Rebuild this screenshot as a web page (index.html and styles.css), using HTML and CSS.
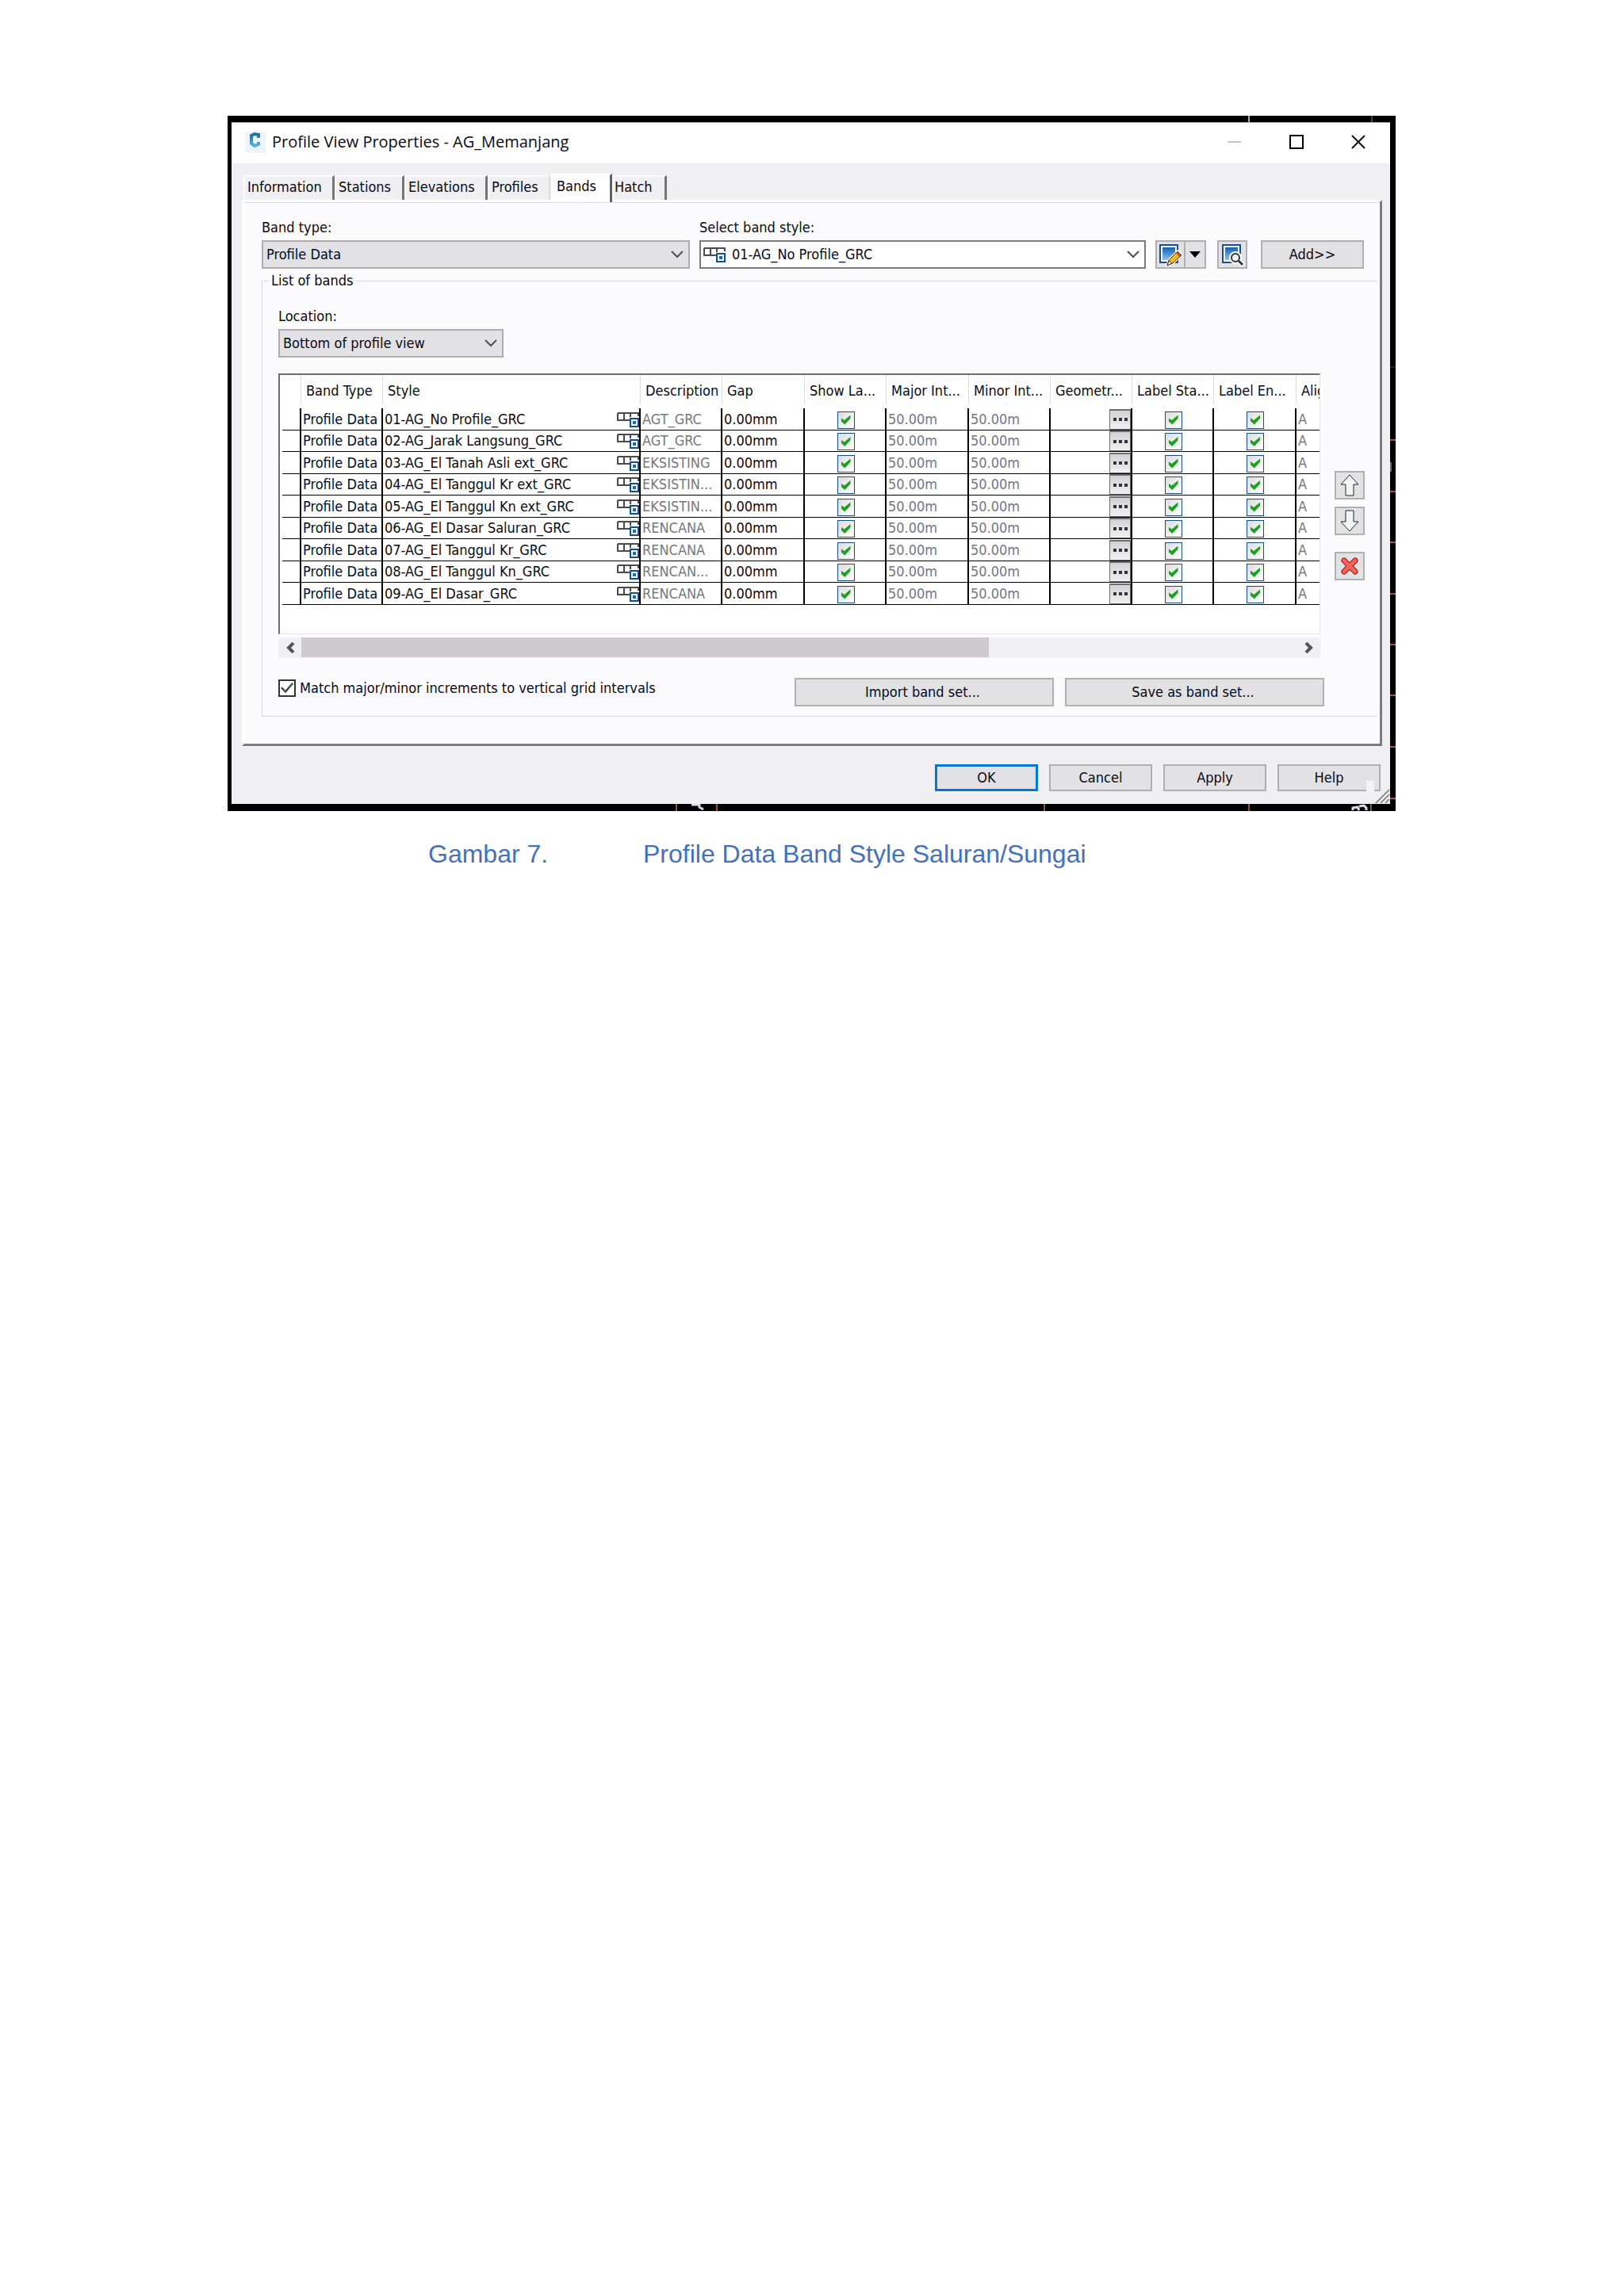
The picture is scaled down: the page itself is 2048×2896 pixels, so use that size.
FILE: index.html
```html
<!DOCTYPE html>
<html lang="id">
<head>
    <meta charset="UTF-8">
    <meta name="viewport" content="width=device-width, initial-scale=1.0">
    <title>Profile View Properties</title>
    <link rel="stylesheet" href="styles.css">
</head>
<body>
    <!-- shared icons -->
    <svg class="defs" width="0" height="0">
        <defs>
            <linearGradient id="blue" x1="0" y1="0" x2="0" y2="1">
                <stop offset="0" stop-color="#0f62b4"/>
                <stop offset="1" stop-color="#8cc0f0"/>
            </linearGradient>
            <linearGradient id="logo" x1="0" y1="0" x2="0" y2="1">
                <stop offset="0" stop-color="#1f6f9f"/>
                <stop offset="1" stop-color="#4ab4ea"/>
            </linearGradient>
        </defs>
        <symbol id="band" viewBox="0 0 28 20">
            <path d="M1 2H27V6M1 2V11H16M9 2V11M17 2V7" fill="none" stroke="#4a4a4c" stroke-width="2"/>
            <rect x="16" y="8" width="12" height="12" fill="#0d4f99"/>
            <rect x="18" y="10" width="8" height="8" fill="#fff"/>
            <rect x="20" y="12" width="4" height="4" fill="#1769c4"/>
        </symbol>
        <symbol id="chevron" viewBox="0 0 16 10">
            <path d="M1 1L8 8L15 1" fill="none" stroke="#505050" stroke-width="2"/>
        </symbol>
    </svg>

    <figure>
        <div class="capture">
            <svg class="grid-right" width="7" height="878">
                <path d="M0 317H7M0 862H7" stroke="#444"/>
                <path d="M0 409H7M0 474H7M0 538H7M0 603H7M0 667H7M0 731H7M0 796H7M0 861H7" stroke="#a8505c" stroke-width="2"/>
                <path d="M1 437V449" stroke="#666" stroke-width="2"/>
            </svg>
            <svg class="grid-top" width="186" height="8">
                <path d="M1 0V8" stroke="#aaa" stroke-width="2"/>
                <path d="M156 0V8" stroke="#444" stroke-width="2"/>
            </svg>
            <svg class="grid-bottom" width="908" height="9">
                <path d="M1 0V9M52 0V9M465 0V9M723 0V9" stroke="#90505a" stroke-width="2"/>
                <path d="M877 0V9" stroke="#666" stroke-width="2"/>
                <path d="M20 1H30V4L35 7M854 8V5L860 4L862 8M862 3L868 2L871 5V8" fill="none" stroke="#ddd" stroke-width="3"/>
            </svg>

            <div class="dialog">
                <div class="titlebar">
                    <svg class="app-icon" width="26" height="27" viewBox="0 0 26 27">
                        <rect width="26" height="27" fill="#edf5fa"/>
                        <path d="M17 8V4L12 3L8 5V15L12 18L17 16V13" fill="none" stroke="url(#logo)" stroke-width="4"/>
                    </svg>
                    <h1>Profile View Properties - AG_Memanjang</h1>
                    <button type="button" class="win" aria-label="Minimize" disabled><svg width="18" height="18"><path d="M0 9H17" stroke="#c4c4c4" stroke-width="2"/></svg></button>
                    <button type="button" class="win" aria-label="Maximize"><svg width="18" height="18"><rect x="1" y="1" width="16" height="16" fill="none" stroke="#000" stroke-width="2"/></svg></button>
                    <button type="button" class="win" aria-label="Close"><svg width="18" height="18"><path d="M1 1L17 17M17 1L1 17" stroke="#111" stroke-width="2"/></svg></button>
                </div>

                <div class="tabs" role="tablist">
                    <button type="button" role="tab">Information</button>
                    <button type="button" role="tab">Stations</button>
                    <button type="button" role="tab">Elevations</button>
                    <button type="button" role="tab" class="before-active">Profiles</button>
                    <button type="button" role="tab" class="active" aria-selected="true">Bands</button>
                    <button type="button" role="tab">Hatch</button>
                </div>

                <div class="panel">
                    <div class="top-row">
                        <div class="field type">
                            <label for="bandType">Band type:</label>
                            <div class="combo">
                                <select id="bandType"><option>Profile Data</option></select>
                                <svg class="arrow"><use href="#chevron"/></svg>
                            </div>
                        </div>
                        <div class="field style">
                            <label for="bandStyle">Select band style:</label>
                            <div class="combo white">
                                <svg class="combo-icon"><use href="#band"/></svg>
                                <select id="bandStyle"><option>01-AG_No Profile_GRC</option></select>
                                <svg class="arrow"><use href="#chevron"/></svg>
                            </div>
                        </div>
                        <div class="split">
                            <button type="button" class="btn icon" aria-label="Edit style">
                                <svg width="32" height="32" viewBox="0 0 32 32">
                                    <rect x="2" y="3" width="24" height="24" fill="#154f96"/>
                                    <rect x="4" y="5" width="20" height="20" fill="#fff"/>
                                    <rect x="6" y="7" width="16" height="16" fill="url(#blue)"/>
                                    <path d="M12 30L14 23L25 12L30 17L19 27Z" fill="#f2b830" stroke="#fff" stroke-width="3"/>
                                    <path d="M12 30L14 23L25 12L30 17L19 27Z" fill="#f2b830" stroke="#5a3d10"/>
                                    <path d="M23 14L25 12L30 17L27 19Z" fill="#b5562a"/>
                                    <path d="M12 30L14 24L18 27Z" fill="#fff" stroke="#333"/>
                                </svg>
                            </button>
                            <button type="button" class="btn drop" aria-label="More"><svg width="14" height="8"><path d="M0 0H14L7 8Z"/></svg></button>
                        </div>
                        <button type="button" class="btn icon search" aria-label="Pick style">
                            <svg width="32" height="32" viewBox="0 0 32 32">
                                <rect x="3" y="3" width="24" height="24" fill="#154f96"/>
                                <rect x="5" y="5" width="20" height="20" fill="#fff"/>
                                <rect x="7" y="7" width="16" height="16" fill="url(#blue)"/>
                                <path d="M24 24L30 30" stroke="#fff" stroke-width="6"/>
                                <circle cx="20" cy="20" r="6" fill="#f4f4f4" stroke="#fff" stroke-width="4"/>
                                <circle cx="20" cy="20" r="5" fill="#f4f4f4" stroke="#333" stroke-width="2"/>
                                <path d="M24 24L29 29" stroke="#333" stroke-width="3"/>
                            </svg>
                        </button>
                        <button type="button" class="btn add">Add&gt;&gt;</button>
                    </div>

                    <fieldset>
                        <legend>List of bands</legend>
                        <div class="field location">
                            <label for="location">Location:</label>
                            <div class="combo">
                                <select id="location"><option>Bottom of profile view</option></select>
                                <svg class="arrow"><use href="#chevron"/></svg>
                            </div>
                        </div>

                        <div class="list-row">
                            <div class="list">
                                <div class="table-box">
                                    <table>
                                        <colgroup>
                                            <col class="c-mark"><col class="c-std"><col class="c-style"><col class="c-std"><col class="c-wide"><col class="c-std">
                                            <col class="c-wide"><col class="c-std"><col class="c-std"><col class="c-std"><col class="c-wide"><col class="c-std">
                                        </colgroup>
                                        <thead>
                                            <tr><th></th><th>Band Type</th><th>Style</th><th>Description</th><th>Gap</th><th>Show La...</th><th>Major Int...</th><th>Minor Int...</th><th>Geometr...</th><th>Label Sta...</th><th>Label En...</th><th>Alig</th></tr>
                                        </thead>
                                        <tbody id="bands"></tbody>
                                    </table>
                                </div>
                                <div class="scrollbar">
                                    <button type="button" aria-label="Scroll left"><svg width="12" height="14"><path d="M10 1L4 7L10 13" fill="none" stroke="#555" stroke-width="4"/></svg></button>
                                    <div class="track"><div class="thumb"></div></div>
                                    <button type="button" aria-label="Scroll right"><svg width="12" height="14"><path d="M2 1L8 7L2 13" fill="none" stroke="#555" stroke-width="4"/></svg></button>
                                </div>
                            </div>
                            <div class="side">
                                <button type="button" class="btn icon" aria-label="Move up"><svg width="26" height="30"><path d="M13 2L24 14H18V28H8V14H2Z" fill="#f4f6f6" stroke="#222"/></svg></button>
                                <button type="button" class="btn icon" aria-label="Move down"><svg width="26" height="30"><path d="M13 28L24 16H18V2H8V16H2Z" fill="#f4f6f6" stroke="#222"/></svg></button>
                                <button type="button" class="btn icon remove" aria-label="Remove">
                                    <svg width="26" height="26"><path d="M6 6L20 20M20 6L6 20" stroke="#8e1512" stroke-width="7" stroke-linecap="round"/><path d="M6 6L20 20M20 6L6 20" stroke="#fb6158" stroke-width="5" stroke-linecap="round"/></svg>
                                </button>
                            </div>
                        </div>

                        <div class="set-row">
                            <input type="checkbox" id="match" checked>
                            <label for="match">Match major/minor increments to vertical grid intervals</label>
                            <button type="button" class="btn wide">Import band set...</button>
                            <button type="button" class="btn wide">Save as band set...</button>
                        </div>
                    </fieldset>
                </div>

                <div class="footer">
                    <button type="button" class="btn default">OK</button>
                    <button type="button" class="btn">Cancel</button>
                    <button type="button" class="btn">Apply</button>
                    <button type="button" class="btn">Help</button>
                    <svg class="grip" width="32" height="32">
                        <rect x="2" y="3" width="10" height="14" fill="#f4f3f5"/>
                        <path d="M14 31L31 14M20 31L31 20M26 31L31 26" stroke="#909090" stroke-width="2"/>
                        <path d="M17 31L31 17M23 31L31 23" stroke="#fff"/>
                    </svg>
                </div>
            </div>
        </div>
        <figcaption><span class="number">Gambar 7.</span><span>Profile Data Band Style Saluran/Sungai</span></figcaption>
    </figure>

    <script>
        const bands = [
            ["01-AG_No Profile_GRC", "AGT_GRC"],
            ["02-AG_Jarak Langsung_GRC", "AGT_GRC"],
            ["03-AG_El Tanah Asli ext_GRC", "EKSISTING"],
            ["04-AG_El Tanggul Kr ext_GRC", "EKSISTIN..."],
            ["05-AG_El Tanggul Kn ext_GRC", "EKSISTIN..."],
            ["06-AG_El Dasar Saluran_GRC", "RENCANA"],
            ["07-AG_El Tanggul Kr_GRC", "RENCANA"],
            ["08-AG_El Tanggul Kn_GRC", "RENCAN..."],
            ["09-AG_El Dasar_GRC", "RENCANA"]
        ];
        const check = name => `<td class="tick"><input type="checkbox" aria-label="${name}" checked></td>`;

        document.getElementById("bands").innerHTML = bands.map(([style, description]) => `
            <tr>
                <td></td>
                <td>Profile Data</td>
                <td><div class="style-cell">${style}<svg><use href="#band"/></svg></div></td>
                <td class="dim">${description}</td>
                <td>0.00mm</td>
                ${check("Show labels")}
                <td class="dim">50.00m</td>
                <td class="dim">50.00m</td>
                <td class="more"><button type="button" aria-label="Geometry points"><svg width="18" height="4"><path d="M0 0H4V4H0ZM7 0H11V4H7ZM14 0H18V4H14Z" fill="#333"/></svg></button></td>
                ${check("Label start")}
                ${check("Label end")}
                <td class="dim">A</td>
            </tr>`).join("");
    </script>
</body>
</html>
```
FILE: styles.css
```css
* { box-sizing: border-box; }
body { margin: 0; background: #fff; font-family: "DejaVu Sans Condensed", "Open Sans", sans-serif; font-size: 18px; line-height: 22px; color: #0a0a14; }
button, select, input { font: inherit; color: inherit; margin: 0; }
button { padding: 0; }
svg { display: block; flex: none; }
.defs { position: absolute; }

figure { margin: 0; padding: 146px 288px 0 287px; }
.capture { position: relative; background: #000; padding: 8px 7px 9px 5px; }
.grid-right { position: absolute; right: 0; top: 0; }
.grid-top { position: absolute; right: 0; top: 0; }
.grid-bottom { position: absolute; right: 0; bottom: 0; }

.dialog { position: relative; background: #f0eff1; }

/* title bar */
.titlebar { display: flex; align-items: center; height: 52px; padding: 0 31px 3px 17px; background: #fff; border-top: 1px solid #aaa; }
.app-icon { margin-right: 8px; }
.titlebar h1 { flex: 1; margin: 0; font-family: "Open Sans", sans-serif; font-size: 20px; font-weight: 400; line-height: 26px; }
.win { width: 18px; height: 18px; margin-left: 60px; border: 0; background: none; }

/* tabs */
.tabs { display: grid; grid-template-columns: 115px 88px 105px 80px 77px 69px; align-items: end; height: 46px; padding-left: 15px; }
.tabs button { height: 31px; padding: 0 0 4px 3px; text-align: left; background: #f0eff1; border: 0; border-top: 2px solid #fafafa; border-left: 2px solid #fafafa; border-right: 3px solid #747476; white-space: nowrap; }
.tabs .before-active { border-right: 2px solid #dcdcde; margin-right: 1px; }
.tabs .active { position: relative; height: 36px; margin-bottom: -3px; padding-bottom: 6px; padding-left: 5px; background: #fff; border-color: #fff #626264 #fff #fff; }
.tabs button:last-child { padding-left: 1px; }

.panel { margin: 0 10px 0 13px; padding: 21px 0 34px 22px; background: #fbfafd; border: 3px solid; border-color: #fff #7c7c7e #7c7c7e #fff; box-shadow: inset 0 1px #dcdbde; }

/* drop-downs */
.field label { display: block; margin-bottom: 5px; }
.combo { position: relative; display: flex; align-items: center; height: 36px; background: #e2e1e3; border: 2px solid #adadaf; }
.combo select { flex: 1; min-width: 0; height: 32px; padding: 0 30px 0 4px; border: 0; outline: 0; background: none; appearance: none; }
.combo .arrow { position: absolute; right: 6px; width: 16px; height: 10px; pointer-events: none; }
.combo.white { background: #fff; border-color: #7a7a7c; }
.combo.white select { padding-left: 8px; }
.combo-icon { width: 28px; height: 20px; margin-left: 3px; }

.btn { height: 36px; background: #e2e1e3; border: 2px solid #b0afb1; border-radius: 0; }
.icon { display: flex; align-items: center; justify-content: center; width: 38px; }

.top-row { display: flex; align-items: flex-end; margin-right: 20px; }
.type { flex: 540; margin-right: 12px; }
.style { flex: 563; margin-right: 12px; }
.split { display: flex; margin-right: 14px; }
.drop { display: flex; align-items: center; justify-content: center; width: 26px; border-left: 0; }
.search { margin-right: 17px; }
.add { width: 130px; }

/* list of bands */
fieldset { min-width: 0; margin: 3px 3px 0 0; padding: 22px 16px 12px 20px; border: 1px solid #d8d7da; border-right: 0; }
legend { margin-left: -12px; padding: 0 4px 0 3px; line-height: 24px; }
.location { width: 284px; margin-bottom: 20px; }
.list-row { display: flex; gap: 18px; }
.list { flex: 1; min-width: 0; }
.table-box { overflow: hidden; padding: 0 0 36px 3px; background: #fff; border: 1px solid #e3e3e3; border-top: 2px solid #6e6e70; border-left: 2px solid #6e6e70; }

table { width: 1279px; table-layout: fixed; border-collapse: separate; border-spacing: 0; }
.c-mark { width: 24px; }
.c-std { width: 103px; }
.c-wide { width: 104px; }
.c-style { width: 325px; }
th, td { padding: 0 0 0 2px; text-align: left; font-weight: 400; white-space: nowrap; }
th { height: 42px; padding: 0 0 2px 6px; background: linear-gradient(#dcdcde, #dcdcde) right top / 1px 37px no-repeat; }
td { height: 27px; border-right: 2px solid #000; border-bottom: 1px solid #000; line-height: 24px; }
tr:nth-child(odd) td { height: 28px; }
.dim { color: #77777a; }
.style-cell { display: flex; align-items: center; justify-content: space-between; }
.style-cell svg { width: 28px; height: 20px; }
.tick { padding: 0 0 0 2px; }
.tick input { display: block; width: 22px; height: 22px; margin: 2px auto 0; padding: 4px; appearance: none; border: 1px solid #174f80; background: linear-gradient(135deg, #dcdcdc, #fff); }
.tick input:checked::after { content: ""; display: block; width: 12px; height: 12px; background: #1fa023; clip-path: polygon(0 30%, 35% 55%, 100% 0, 100% 35%, 40% 100%, 0 65%); }
.more { padding: 0; }
.more button { display: flex; align-items: center; justify-content: center; width: 27px; height: 26px; margin-left: auto; border: 1px solid #6e6e70; border-top-width: 2px; background: linear-gradient(#d2d2d4, #f0f0f2); }

.scrollbar { display: flex; height: 26px; margin-top: 4px; background: #f0eff1; }
.scrollbar button { display: flex; align-items: center; justify-content: center; width: 29px; border: 0; background: none; }
.track { flex: 1; }
.thumb { width: 69%; height: 25px; background: #cdcbce; }

.side { display: flex; flex-direction: column; gap: 9px; width: 38px; padding-top: 123px; }
.remove { margin-top: 12px; }

.set-row { display: flex; align-items: center; gap: 14px; margin: 25px 51px 0 0; }
.set-row input { width: 22px; height: 22px; margin: 0 -9px 10px 0; appearance: none; background: #fff; border: 2px solid #333; }
.set-row input:checked::after { content: ""; display: block; width: 16px; height: 14px; margin: 2px 1px; background: #444; clip-path: polygon(0 50%, 12% 40%, 36% 70%, 90% 0, 100% 10%, 38% 95%); }
.set-row label { flex: 1; padding-bottom: 10px; }
.wide { width: 327px; padding-right: 4px; }

/* dialog buttons */
.footer { display: flex; justify-content: flex-end; gap: 14px; padding: 23px 12px 16px; }
.footer .btn { width: 130px; height: 34px; }
.footer .default { border: 3px solid #0078d7; }
.grip { position: absolute; right: 0; bottom: 0; }

figcaption { display: flex; padding: 32px 0 0 253px; font-family: "Liberation Sans", sans-serif; font-size: 32px; line-height: 44px; color: #4470bc; white-space: nowrap; }
.number { width: 271px; }
```
